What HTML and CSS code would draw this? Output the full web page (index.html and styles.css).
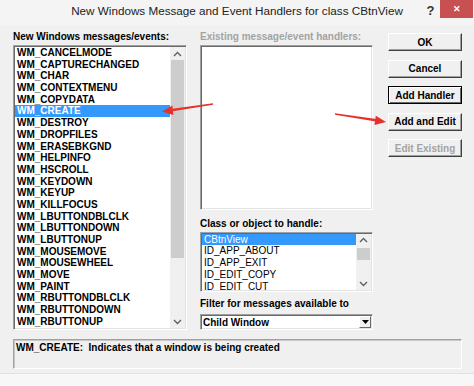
FILE: index.html
```html
<!DOCTYPE html>
<html>
<head>
  <title>New Windows Message and Event Handlers</title>
  <link rel="stylesheet" href="styles.css">
</head>
<body>
  <div id="dialog">
    <div class="titlebar">
      <span class="spacer"></span>
      <span class="title">New Windows Message and Event Handlers for class CBtnView</span>
      <span class="controls">
        <span class="help">?</span>
        <span class="close">&#x2715;</span>
      </span>
    </div>

    <div class="main">
      <div class="col left">
        <p class="label">New Windows messages/events:</p>
        <div class="listbox messages">
          <ul class="items bold">
            <li>WM_CANCELMODE</li>
            <li>WM_CAPTURECHANGED</li>
            <li>WM_CHAR</li>
            <li>WM_CONTEXTMENU</li>
            <li>WM_COPYDATA</li>
            <li class="sel">WM_CREATE</li>
            <li>WM_DESTROY</li>
            <li>WM_DROPFILES</li>
            <li>WM_ERASEBKGND</li>
            <li>WM_HELPINFO</li>
            <li>WM_HSCROLL</li>
            <li>WM_KEYDOWN</li>
            <li>WM_KEYUP</li>
            <li>WM_KILLFOCUS</li>
            <li>WM_LBUTTONDBLCLK</li>
            <li>WM_LBUTTONDOWN</li>
            <li>WM_LBUTTONUP</li>
            <li>WM_MOUSEMOVE</li>
            <li>WM_MOUSEWHEEL</li>
            <li>WM_MOVE</li>
            <li>WM_PAINT</li>
            <li>WM_RBUTTONDBLCLK</li>
            <li>WM_RBUTTONDOWN</li>
            <li>WM_RBUTTONUP</li>
          </ul>
          <div class="scroll">
            <div class="arrow"><svg width="9" height="6" viewBox="0 0 9 6"><polyline points="1,5 4.5,1.5 8,5" fill="none" stroke="#606060" stroke-width="1.4"/></svg></div>
            <div class="thumb big-thumb"></div>
            <div class="track"></div>
            <div class="arrow"><svg width="9" height="6" viewBox="0 0 9 6"><polyline points="1,1 4.5,4.5 8,1" fill="none" stroke="#606060" stroke-width="1.4"/></svg></div>
          </div>
        </div>
      </div>

      <div class="col middle">
        <p class="label disabled">Existing message/event handlers:</p>
        <div class="listbox existing"></div>

        <p class="label gap-label">Class or object to handle:</p>
        <div class="listbox classes">
          <ul class="items">
            <li class="sel">CBtnView</li>
            <li>ID_APP_ABOUT</li>
            <li>ID_APP_EXIT</li>
            <li>ID_EDIT_COPY</li>
            <li>ID_EDIT_CUT</li>
          </ul>
          <div class="scroll">
            <div class="arrow"><svg width="9" height="6" viewBox="0 0 9 6"><polyline points="1,5 4.5,1.5 8,5" fill="none" stroke="#606060" stroke-width="1.4"/></svg></div>
            <div class="thumb small-thumb"></div>
            <div class="track"></div>
            <div class="arrow"><svg width="9" height="6" viewBox="0 0 9 6"><polyline points="1,1 4.5,4.5 8,1" fill="none" stroke="#606060" stroke-width="1.4"/></svg></div>
          </div>
        </div>

        <p class="label filter-label">Filter for messages available to</p>
        <div class="combo">
          <span class="combo-text">Child Window</span>
          <span class="drop"><svg width="7" height="4" viewBox="0 0 7 4"><polygon points="0,0 7,0 3.5,4" fill="#000"/></svg></span>
        </div>
      </div>

      <div class="col buttons">
        <button class="btn">OK</button>
        <button class="btn">Cancel</button>
        <button class="btn default">Add Handler</button>
        <button class="btn">Add and Edit</button>
        <button class="btn" disabled>Edit Existing</button>
      </div>
    </div>

    <div class="status">WM_CREATE:&nbsp; Indicates that a window is being created</div>
    <div class="footer"></div>

    <svg class="marks" width="474" height="386" viewBox="0 0 474 386">
      <polygon points="213,103.2 213,104.8 172.7,111.2 172.5,108.8" fill="#e8302b"/>
      <polygon points="162,111.5 173.4,115 172.4,105.5" fill="#e8302b"/>
      <polygon points="335,113.3 335,114.7 375.8,121.6 376.2,119" fill="#e8302b"/>
      <polygon points="386,122 374.5,125 375.8,115.8" fill="#e8302b"/>
    </svg>
  </div>
</body>
</html>
```

FILE: styles.css
```css
*{
  margin: 0;
  padding: 0;
  box-sizing: border-box;
}

body{
  background-color: #f0f0f0;
  font-family: "Liberation Sans", Arial, sans-serif;
  font-size: 10px;
  color: #000;
}

#dialog{
  position: relative;
  width: 474px;
  height: 386px;
  overflow: hidden;
}

/* title bar */
.titlebar{
  height: 25px;
  display: grid;
  grid-template-columns: 52px minmax(0, 1fr) 52px;
  background-color: #f4f4f4;
}
.title{
  text-align: center;
  font-size: 11.7px;
  line-height: 22px;
  color: #222;
  white-space: nowrap;
}
.controls{
  display: flex;
  align-items: flex-start;
}
.help{
  width: 17px;
  text-align: center;
  font-size: 13px;
  font-weight: bold;
  line-height: 22px;
  color: #333;
}
.close{
  width: 33px;
  height: 18px;
  margin-left: 1px;
  background-color: #c75050;
  color: #fff;
  font-size: 9px;
  font-weight: bold;
  line-height: 18px;
  text-align: center;
}

/* body of the dialog */
.main{
  display: flex;
  padding: 6px 12px 0 13px;
  height: 305px;
}
.col{
  display: flex;
  flex-direction: column;
}
.left{
  width: 174px;
  margin-right: 13px;
}
.middle{
  width: 173px;
  margin-right: 15px;
}
.buttons{
  width: 74px;
  padding-top: 2px;
}

.label{
  font-weight: bold;
  line-height: 12px;
  white-space: nowrap;
}
.disabled{
  color: #a3a3a3;
}
.gap-label{
  margin-top: 8px;
}
.filter-label{
  margin-top: 6px;
}

.listbox{
  margin-top: 2px;
  background-color: #fff;
  border: 1px solid;
  border-color: #a0a0a0 #fff #fff #a0a0a0;
  box-shadow: inset 1px 1px 0 #696969, inset -1px -1px 0 #e3e3e3;
  display: flex;
  overflow: hidden;
}
.messages{
  height: 285px;
}
.existing{
  height: 167px;
}
.classes{
  height: 61px;
}

.items{
  list-style: none;
  flex: 1;
  padding: 1px 0 0 1px;
  overflow: hidden;
}
.items li{
  line-height: 11.7px;
  height: 11.7px;
  padding-left: 2px;
  white-space: nowrap;
}
.bold{
  font-weight: bold;
}
.sel{
  background-color: #3399ff;
  color: #fff;
}

.scroll{
  width: 15px;
  margin: 1px 1px 1px 0;
  display: flex;
  flex-direction: column;
  background-color: #f0f0f0;
}
.arrow{
  height: 13px;
  display: flex;
  align-items: center;
  justify-content: center;
}
.thumb{
  background-color: #cdcdcd;
  margin: 0 1px;
}
.big-thumb{
  height: 198px;
}
.small-thumb{
  height: 12px;
  margin-top: 1px;
}
.track{
  flex: 1;
}

.combo{
  margin-top: 4px;
  height: 16px;
  background-color: #fff;
  border: 1px solid;
  border-color: #a0a0a0 #fff #fff #a0a0a0;
  box-shadow: inset 1px 1px 0 #696969, inset -1px -1px 0 #e3e3e3;
  display: flex;
  align-items: center;
  padding: 1px 1px 1px 2px;
}
.combo-text{
  flex: 1;
  font-weight: bold;
}
.drop{
  width: 12px;
  height: 12px;
  background-color: #f0f0f0;
  border: 1px solid;
  border-color: #fff #696969 #696969 #fff;
  display: flex;
  align-items: center;
  justify-content: center;
}

/* push buttons */
.btn{
  width: 74px;
  height: 18px;
  margin-bottom: 8.5px;
  font-family: "Liberation Sans", Arial, sans-serif;
  font-size: 10px;
  font-weight: bold;
  color: #000;
  background-color: #f0f0f0;
  border: 1px solid;
  border-color: #fff #404040 #404040 #fff;
  box-shadow: inset -1px -1px 0 #a0a0a0;
}
.default{
  border-color: #000;
  box-shadow: inset 1px 1px 0 #fff, inset -1px -1px 0 #696969;
}
.btn:disabled{
  color: #a3a3a3;
}

/* description line */
.status{
  margin: 9px 12px 0 13px;
  height: 30px;
  padding: 2px 2px;
  font-weight: bold;
  line-height: 12px;
  border: 1px solid;
  border-color: #a0a0a0 #fff #fff #a0a0a0;
  box-shadow: inset 1px 1px 0 #c8c8c8;
}

.footer{
  margin-top: 4px;
  height: 13px;
  background-color: #f7f7f7;
  border-top: 1px solid #e2e2e2;
}

.marks{
  position: absolute;
  top: 0;
  left: 0;
  pointer-events: none;
}
```
